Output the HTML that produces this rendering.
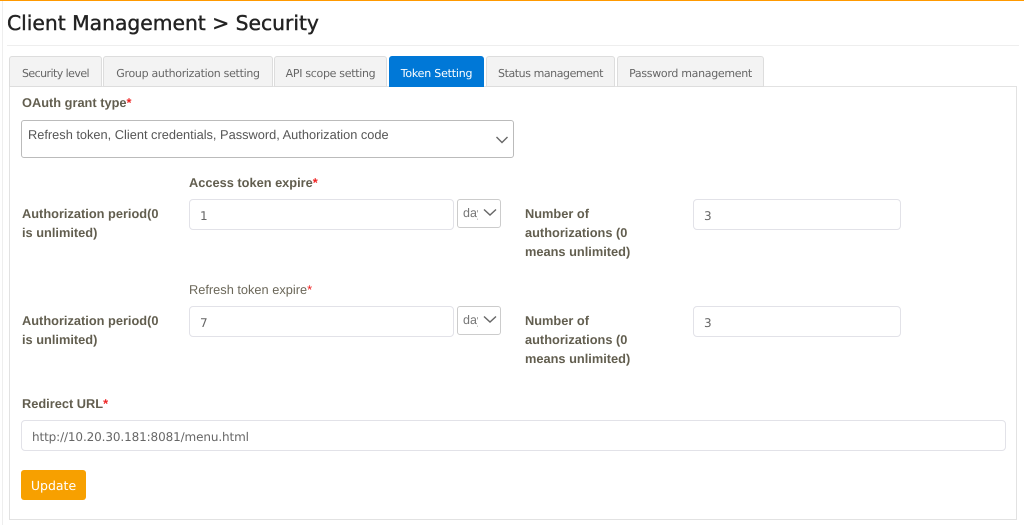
<!DOCTYPE html>
<html><head><meta charset="utf-8"><style>
html,body{margin:0;padding:0;background:#fff;width:1024px;height:525px;overflow:hidden}
body{position:relative;font-family:"Liberation Sans",sans-serif;text-rendering:geometricPrecision}
.a{position:absolute;white-space:nowrap;box-sizing:border-box}
.o{font-family:"DejaVu Sans",sans-serif}
.tab{top:56px;height:31px;background:#f3f3f3;border:1px solid #ddd;border-radius:3px 3px 0 0;color:#666;font:11px/33px "DejaVu Sans",sans-serif;letter-spacing:-.3px;text-align:center;overflow:hidden}
.lb{font-weight:bold;font-size:12.8px;line-height:19px;color:#625e4f;white-space:normal}
.in{background:#fff;border:1px solid #e2e2e8;border-radius:4px;height:31px;color:#666;font:12px/33px "DejaVu Sans",sans-serif;letter-spacing:-.12px;padding-left:10px}
.sel{background:#fff;border:1px solid #ccc;border-radius:3px;height:29px;width:44px;color:#777;font-size:12.5px;line-height:27px;padding-left:5px;overflow:hidden}
.sel span{display:block;width:15px;overflow:hidden}
i{color:#e22;font-style:normal}
</style></head><body>
<div class="a" style="left:0;top:0;width:1024px;height:1px;background:#f90"></div>
<div class="a" style="left:2px;top:1px;width:1px;height:524px;background:#eee"></div>
<div class="a o" style="left:7px;top:9px;font-size:20.3px;line-height:28px;color:#222;-webkit-text-stroke:.4px #222">Client Management &gt; Security</div>
<div class="a" style="left:7px;top:45px;width:1012px;height:1px;background:#eee"></div>
<div class="a" style="left:9px;top:86px;width:1008px;height:434px;border:1px solid #e2e2e2"></div>
<div class="a tab" style="left:9px;width:93px;letter-spacing:-.55px">Security level</div>
<div class="a tab" style="left:103px;width:170px">Group authorization setting</div>
<div class="a tab" style="left:274px;width:113px">API scope setting</div>
<div class="a tab" style="left:389px;width:95px;background:#0078d7;border-color:#0078d7;color:#fff;letter-spacing:-.2px">Token Setting</div>
<div class="a tab" style="left:486px;width:129px;letter-spacing:-.43px">Status management</div>
<div class="a tab" style="left:617px;width:147px">Password management</div>
<div class="a lb" style="left:22px;top:93px">OAuth grant type<i>*</i></div>
<div class="a" style="left:21px;top:120px;width:493px;height:38px;border:1px solid #bbb;border-radius:3px;background:#fff;color:#555;font-size:12.8px;line-height:27px;padding-left:6px">Refresh token, Client credentials, Password, Authorization code</div>
<svg class="a" style="left:495px;top:135px" width="14" height="10"><path d="M1.5 2l5.5 5.5L12.5 2" fill="none" stroke="#666" stroke-width="1.4"/></svg>
<div class="a lb" style="left:189px;top:173px">Access token expire<i>*</i></div>
<div class="a lb" style="left:22px;top:204px;width:145px">Authorization period(0 is unlimited)</div>
<div class="a in" style="left:189px;top:199px;width:265px">1</div>
<div class="a sel" style="left:457px;top:199px"><span>day</span></div>
<svg class="a" style="left:483px;top:208px" width="14" height="10"><path d="M1 1.5l6 5.5 6-5.5" fill="none" stroke="#666" stroke-width="1.4"/></svg>
<div class="a lb" style="left:525px;top:204px;width:125px">Number of authorizations (0 means unlimited)</div>
<div class="a in" style="left:693px;top:199px;width:208px">3</div>
<div class="a" style="left:189px;top:280px;font-size:12.8px;line-height:19px;color:#6b6759">Refresh token expire<i>*</i></div>
<div class="a lb" style="left:22px;top:311px;width:145px">Authorization period(0 is unlimited)</div>
<div class="a in" style="left:189px;top:306px;width:265px">7</div>
<div class="a sel" style="left:457px;top:306px"><span>day</span></div>
<svg class="a" style="left:483px;top:315px" width="14" height="10"><path d="M1 1.5l6 5.5 6-5.5" fill="none" stroke="#666" stroke-width="1.4"/></svg>
<div class="a lb" style="left:525px;top:311px;width:125px">Number of authorizations (0 means unlimited)</div>
<div class="a in" style="left:693px;top:306px;width:208px">3</div>
<div class="a lb" style="left:22px;top:394px">Redirect URL<i>*</i></div>
<div class="a in" style="left:21px;top:420px;width:985px">http://10.20.30.181:8081/menu.html</div>
<div class="a o" style="left:21px;top:470px;width:65px;height:30px;background:#f7a000;border-radius:3px;color:#fff;font-size:12.5px;line-height:31px;text-align:center">Update</div>
</body></html>
